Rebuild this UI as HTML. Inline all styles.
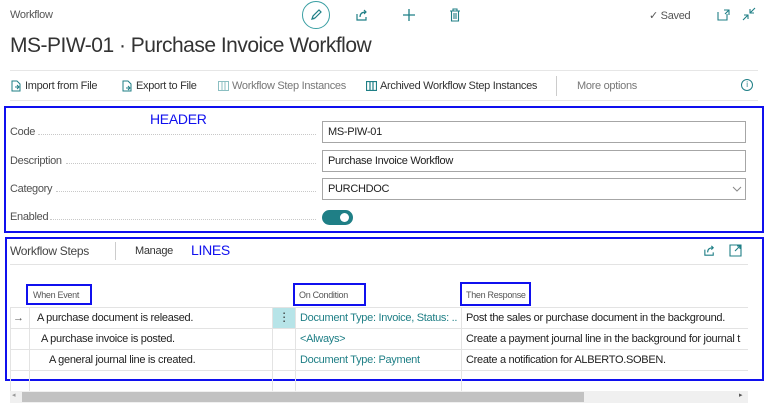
<!DOCTYPE html>
<html><head><style>
*{margin:0;padding:0;box-sizing:border-box}
body{width:768px;height:414px;background:#fff;font-family:"Liberation Sans",sans-serif;position:relative;overflow:hidden;color:#212121;letter-spacing:-0.3px}
.a{position:absolute;white-space:nowrap}
.lbl{font-size:11px;color:#505050}
.dots{position:absolute;border-bottom:1px dotted #c8c8c8;height:1px}
.inp{position:absolute;border:1px solid #a6a6a6;height:22px;font-size:11px;padding:4px 5px;color:#212121}
.blue{border:2px solid #1010ee;position:absolute}
.tb{font-size:11px;color:#333}
.teal{color:#1f7f86}
.hl{position:absolute;height:1px;background:#e3e3e3}
.vl{position:absolute;width:1px;background:#e3e3e3}
</style></head><body>
<div class="a" style="left:10px;top:9px;font-size:11px;color:#555">Workflow</div>
<div class="a" style="left:302px;top:1px;width:28px;height:28px;border:1.5px solid #3a9fa3;border-radius:50%"></div>
<svg class="a" style="left:309px;top:8px" width="14" height="14" viewBox="0 0 14 14"><path d="M3 11 L4 8 L10 2 L12 4 L6 10 Z M3 11 L5.5 10.5" fill="none" stroke="#1f7f86" stroke-width="1.2"/></svg>
<svg class="a" style="left:355px;top:8px" width="14" height="14" viewBox="0 0 14 14"><path d="M2 6 V12 H11 V9 M5 9 C5 5 8 4 11 4 M9 2 L11 4 L9 6" fill="none" stroke="#1f7f86" stroke-width="1.2"/></svg>
<svg class="a" style="left:402px;top:8px" width="14" height="14"><path d="M7 1V13M1 7H13" stroke="#1f7f86" stroke-width="1.3"/></svg>
<svg class="a" style="left:449px;top:8px" width="12" height="14"><path d="M1 3H11M4 3V1H8V3M2.5 3V13H9.5V3M5 5V11M7 5V11" fill="none" stroke="#1f7f86" stroke-width="1.1"/></svg>
<div class="a" style="left:649px;top:9px;font-size:11px;color:#555">✓ Saved</div>
<svg class="a" style="left:717px;top:8px" width="14" height="14"><path d="M1 4V12H10V6M7 2H12V7M12 2L8 6" fill="none" stroke="#1f7f86" stroke-width="1.1"/></svg>
<svg class="a" style="left:742px;top:7px" width="14" height="14"><path d="M1 13L6 8M2 8H6V12M13 1L8 6M8 2V6H12" fill="none" stroke="#1f7f86" stroke-width="1.1"/></svg>
<div class="a" style="left:10px;top:34px;font-size:21px;color:#333;letter-spacing:-0.5px">MS-PIW-01 · Purchase Invoice Workflow</div>
<div class="hl" style="left:10px;top:70px;width:748px;background:#e6e6e6"></div>
<svg class="a" style="left:11px;top:80px" width="10" height="12"><path d="M1 1H6L9 4V11H1Z M4 7H8 M6 5L8 7L6 9" fill="none" stroke="#1f7f86" stroke-width="1"/></svg>
<div class="a tb" style="left:25px;top:80px">Import from File</div>
<svg class="a" style="left:122px;top:80px" width="10" height="12"><path d="M1 1H6L9 4V11H1Z M4 8H8 M6 6L8 8L6 10" fill="none" stroke="#1f7f86" stroke-width="1"/></svg>
<div class="a tb" style="left:136px;top:80px">Export to File</div>
<svg class="a" style="left:218px;top:81px" width="11" height="10"><path d="M0.5 0.5H10.5V9.5H0.5Z M4 0.5V9.5M7 0.5V9.5" fill="none" stroke="#8bbfc2" stroke-width="1"/></svg>
<div class="a tb" style="left:232px;top:80px;color:#777">Workflow Step Instances</div>
<svg class="a" style="left:366px;top:81px" width="11" height="10"><path d="M0.5 0.5H10.5V9.5H0.5Z M4 0.5V9.5M7 0.5V9.5" fill="none" stroke="#1f7f86" stroke-width="1.2"/></svg>
<div class="a tb" style="left:380px;top:80px">Archived Workflow Step Instances</div>
<div class="vl" style="left:556px;top:76px;height:20px;background:#ccc"></div>
<div class="a tb" style="left:577px;top:80px;color:#777">More options</div>
<div class="a" style="left:741px;top:79px;width:12px;height:12px;border:1px solid #1f7f86;border-radius:50%;font-size:8px;color:#1f7f86;text-align:center;line-height:10px">i</div>
<div class="hl" style="left:10px;top:100px;width:748px;background:#e6e6e6"></div>

<div class="blue" style="left:4px;top:106px;width:760px;height:127px"></div>
<div class="a" style="left:150px;top:111px;font-size:14px;color:#1010ee">HEADER</div>
<div class="a lbl" style="left:10px;top:126px">Code</div><div class="dots" style="left:38px;top:134px;width:278px"></div>
<div class="inp" style="left:322px;top:121px;width:424px">MS-PIW-01</div>
<div class="a lbl" style="left:10px;top:155px">Description</div><div class="dots" style="left:66px;top:163px;width:250px"></div>
<div class="inp" style="left:322px;top:150px;width:424px">Purchase Invoice Workflow</div>
<div class="a lbl" style="left:10px;top:183px">Category</div><div class="dots" style="left:56px;top:191px;width:260px"></div>
<div class="inp" style="left:322px;top:178px;width:424px">PURCHDOC</div>
<svg class="a" style="left:732px;top:185px" width="10" height="8"><path d="M1 2L5 6L9 2" fill="none" stroke="#888"/></svg>
<div class="a lbl" style="left:10px;top:211px">Enabled</div><div class="dots" style="left:50px;top:219px;width:266px"></div>
<div class="a" style="left:322px;top:210px;width:31px;height:15px;border-radius:8px;background:#1f7f86"></div>
<div class="a" style="left:340px;top:213px;width:9px;height:9px;border-radius:50%;background:#fff"></div>

<div class="blue" style="left:5px;top:237px;width:759px;height:144px"></div>
<div class="a" style="left:10px;top:244px;font-size:12px;color:#444">Workflow Steps</div>
<div class="vl" style="left:115px;top:242px;height:18px;background:#ccc"></div>
<div class="a" style="left:135px;top:245px;font-size:11px;color:#333">Manage</div>
<div class="a" style="left:191px;top:242px;font-size:14px;color:#1010ee">LINES</div>
<svg class="a" style="left:703px;top:244px" width="13" height="13" viewBox="0 0 14 14"><path d="M2 6 V12 H11 V9 M5 9 C5 5 8 4 11 4 M9 2 L11 4 L9 6" fill="none" stroke="#1f7f86" stroke-width="1.2"/></svg>
<svg class="a" style="left:729px;top:244px" width="13" height="13"><path d="M1 1H12V12H1Z M6 7L11 2M8 2H11V5" fill="none" stroke="#1f7f86" stroke-width="1.1"/></svg>
<div class="hl" style="left:10px;top:264px;width:738px"></div>
<div class="blue" style="left:26px;top:284px;width:66px;height:21px"></div>
<div class="a" style="left:33px;top:290px;font-size:9px;color:#555">When Event</div>
<div class="blue" style="left:293px;top:283px;width:73px;height:23px"></div>
<div class="a" style="left:299px;top:290px;font-size:9px;color:#555">On Condition</div>
<div class="blue" style="left:460px;top:282px;width:71px;height:24px"></div>
<div class="a" style="left:466px;top:290px;font-size:9px;color:#555">Then Response</div>
<div class="hl" style="left:10px;top:307px;width:738px"></div>
<div class="hl" style="left:10px;top:328px;width:738px"></div>
<div class="hl" style="left:10px;top:349px;width:738px"></div>
<div class="hl" style="left:10px;top:370px;width:738px"></div>
<div class="vl" style="left:10px;top:307px;height:84px"></div>
<div class="vl" style="left:29px;top:307px;height:84px"></div>
<div class="vl" style="left:272px;top:307px;height:84px"></div>
<div class="vl" style="left:295px;top:307px;height:84px"></div>
<div class="vl" style="left:461px;top:307px;height:84px"></div>
<div class="a" style="left:273px;top:308px;width:22px;height:20px;background:#b7e4e8;text-align:center;font-size:12px;color:#333;line-height:18px">⋮</div>
<div class="a" style="left:13px;top:312px;font-size:11px;color:#555">→</div>
<div class="a" style="left:37px;top:312px;font-size:11px">A purchase document is released.</div>
<div class="a" style="left:41px;top:333px;font-size:11px">A purchase invoice is posted.</div>
<div class="a" style="left:49px;top:354px;font-size:11px">A general journal line is created.</div>
<div class="a teal" style="left:300px;top:312px;font-size:11px;width:158px;overflow:hidden">Document Type: Invoice, Status: ...</div>
<div class="a teal" style="left:300px;top:333px;font-size:11px">&lt;Always&gt;</div>
<div class="a teal" style="left:300px;top:354px;font-size:11px">Document Type: Payment</div>
<div class="a" style="left:466px;top:312px;font-size:11px">Post the sales or purchase document in the background.</div>
<div class="a" style="left:466px;top:333px;font-size:11px;width:282px;overflow:hidden">Create a payment journal line in the background for journal t</div>
<div class="a" style="left:466px;top:354px;font-size:11px">Create a notification for ALBERTO.SOBEN.</div>
<div class="a" style="left:10px;top:391px;width:738px;height:12px;background:#f0f0f0"></div>
<div class="a" style="left:22px;top:392px;width:562px;height:10px;background:#c2c2c2"></div>
<div class="a" style="left:12px;top:391px;font-size:7px;color:#999">◂</div>
<div class="a" style="left:739px;top:391px;font-size:7px;color:#555">▸</div>
</body></html>
